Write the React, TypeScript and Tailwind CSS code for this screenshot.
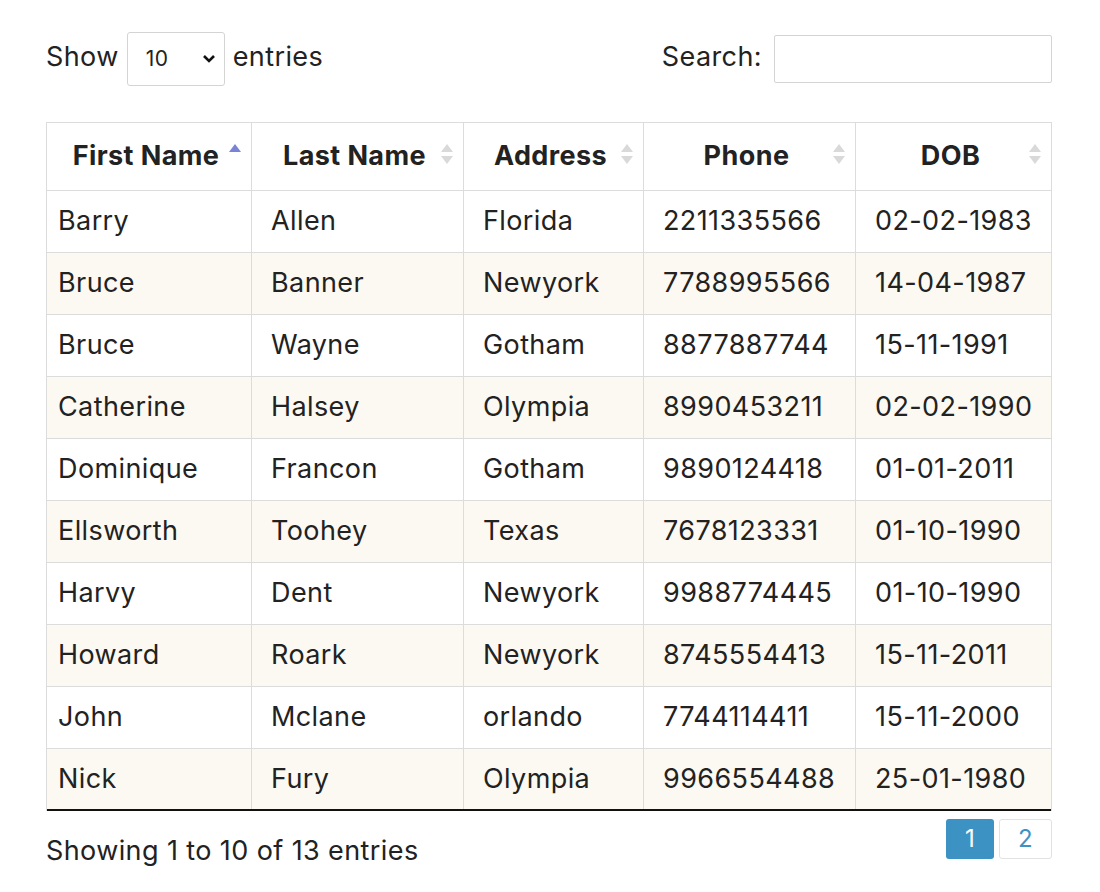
import React from "react";

const rows = [
  ["Barry","Allen","Florida","2211335566","02-02-1983"],
  ["Bruce","Banner","Newyork","7788995566","14-04-1987"],
  ["Bruce","Wayne","Gotham","8877887744","15-11-1991"],
  ["Catherine","Halsey","Olympia","8990453211","02-02-1990"],
  ["Dominique","Francon","Gotham","9890124418","01-01-2011"],
  ["Ellsworth","Toohey","Texas","7678123331","01-10-1990"],
  ["Harvy","Dent","Newyork","9988774445","01-10-1990"],
  ["Howard","Roark","Newyork","8745554413","15-11-2011"],
  ["John","Mclane","orlando","7744114411","15-11-2000"],
  ["Nick","Fury","Olympia","9966554488","25-01-1980"],
];
const cols = [
  { n: "First Name", w: "w-[205px]", active: true },
  { n: "Last Name", w: "w-[212px]" },
  { n: "Address", w: "w-[180px]" },
  { n: "Phone", w: "w-[212px]" },
  { n: "DOB", w: "flex-1" },
];

function Sort({ active }: { active?: boolean }) {
  return (
    <svg width="14" height="30" viewBox="0 0 14 30" className="absolute right-[9px] top-[16px]">
      <path d="M1 13 L7 5 L13 13 Z" fill={active ? "#7b83d6" : "#d9d9d9"} />
      {!active && <path d="M1 17 L7 25 L13 17 Z" fill="#d9d9d9" />}
    </svg>
  );
}

export default function App() {
  return (
    <div className="w-[1100px] h-[892px] bg-white text-[#222] text-[27px] tracking-[0.4px]" style={{ fontFamily: "Inter, 'Noto Sans', sans-serif" }}>
      <div className="ml-[46px] w-[1006px] pt-[32px]">
        <div className="flex justify-between items-center h-[54px]">
          <div className="flex items-center">
            <span className="-mt-[4px]">Show</span>
            <div className="mx-[8px] w-[98px] h-[54px] border border-[#d4d4d4] rounded-[3px] flex items-center justify-between pl-[18px] pr-[8px] text-[21px]">
              <span>10</span>
              <svg width="14" height="10" viewBox="0 0 14 10"><path d="M2 2 L7 7 L12 2" stroke="#111" strokeWidth="2.6" fill="none" /></svg>
            </div>
            <span className="-mt-[4px]">entries</span>
          </div>
          <div className="flex items-center">
            <span className="mr-[12px] -mt-[4px]">Search:</span>
            <div className="w-[278px] h-[48px] border border-[#d4d4d4] rounded-[2px]" />
          </div>
        </div>
        <div className="mt-[36px] border-t border-x border-[#dcdcdc]">
          <div className="flex h-[68px] border-b border-[#dcdcdc] font-bold">
            {cols.map((c, i) => (
              <div key={i} className={`${c.w} relative flex items-center justify-center pr-[6px] ${i < 4 ? "border-r border-[#dcdcdc]" : ""}`}>
                {c.n}
                <Sort active={c.active} />
              </div>
            ))}
          </div>
          {rows.map((r, ri) => (
            <div key={ri} className={`flex h-[62px] ${ri % 2 ? "bg-[#fcf9f2]" : "bg-white"} ${ri < 9 ? "border-b border-[#dcdcdc]" : "border-b-2 border-b-[#111]"}`}>
              {r.map((v, i) => (
                <div key={i} className={`${cols[i].w} flex items-center ${i === 0 ? "pl-[11px]" : "pl-[19px]"} ${i < 4 ? "border-r border-[#dcdcdc]" : ""}`}>{v}</div>
              ))}
            </div>
          ))}
        </div>
        <div className="flex justify-between mt-[8px]">
          <span className="mt-[12px]">Showing 1 to 10 of 13 entries</span>
          <div className="flex gap-[5px] h-[40px]">
            <div className="w-[48px] bg-[#3d92c4] text-white rounded-[3px] flex items-center justify-center text-[24px]">1</div>
            <div className="w-[53px] border border-[#e2e2e2] text-[#3d92c4] rounded-[3px] flex items-center justify-center text-[24px]">2</div>
          </div>
        </div>
      </div>
    </div>
  );
}
